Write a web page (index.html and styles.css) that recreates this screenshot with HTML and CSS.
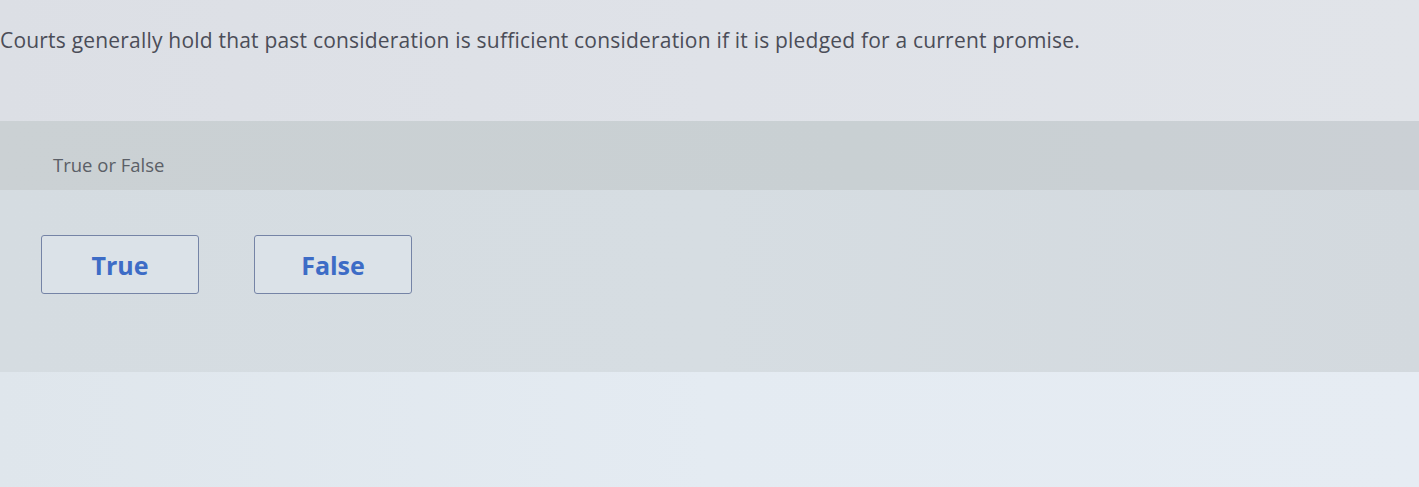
FILE: index.html
```html
<!DOCTYPE html>
<html lang="en">
<head>
<meta charset="utf-8">
<title>True or False</title>
<link rel="stylesheet" href="styles.css">
</head>
<body>
<main class="question-card">
  <section class="stem">
    <p class="stem-text">Courts generally hold that past consideration is sufficient consideration if it is pledged for a current promise.</p>
  </section>
  <section class="prompt">
    <span class="prompt-label">True or False</span>
  </section>
  <section class="answers">
    <button class="choice" type="button">True</button>
    <button class="choice" type="button">False</button>
  </section>
  <section class="footer"></section>
</main>
</body>
</html>
```

FILE: styles.css
```css
html, body {
  margin: 0;
  padding: 0;
}

body {
  background: #e2e7ed;
  font-family: "Open Sans", "Liberation Sans", sans-serif;
  overflow: hidden;
}

.question-card {
  display: flex;
  flex-direction: column;
  height: 487px;
}

.stem {
  height: 121px;
  box-sizing: border-box;
  padding: 25px 0 0 0;
  background: linear-gradient(90deg, #dcdfe5 0%, #dfe2e8 50%, #e1e4e9 100%);
}

.stem-text {
  margin: 0;
  font-size: 21px;
  line-height: 30px;
  letter-spacing: 0.2px;
  color: #4b4d58;
}

.prompt {
  height: 69px;
  box-sizing: border-box;
  display: flex;
  align-items: center;
  padding: 0 0 0 53px;
  background: linear-gradient(90deg, #cbd1d4 0%, #c9d0d3 60%, #cbd0d5 100%);
}

.prompt-label {
  font-size: 18.5px;
  color: #5b5f67;
  margin-top: 18px;
}

.answers {
  height: 182px;
  box-sizing: border-box;
  display: flex;
  align-items: flex-start;
  gap: 55px;
  padding: 45px 0 0 41px;
  background: linear-gradient(90deg, #d5dce1 0%, #d6dde2 50%, #d3d9de 100%);
}

.choice {
  width: 158px;
  height: 59px;
  box-sizing: border-box;
  background: #dbe2e8;
  border: 1.5px solid #7584a6;
  border-radius: 3px;
  font-family: inherit;
  font-size: 25px;
  font-weight: 700;
  color: #3d6cc6;
  cursor: pointer;
  padding: 0;
}

.footer {
  flex: 1;
  background: linear-gradient(90deg, #dfe6ec 0%, #e4ebf2 50%, #e6ecf3 100%);
}
```
